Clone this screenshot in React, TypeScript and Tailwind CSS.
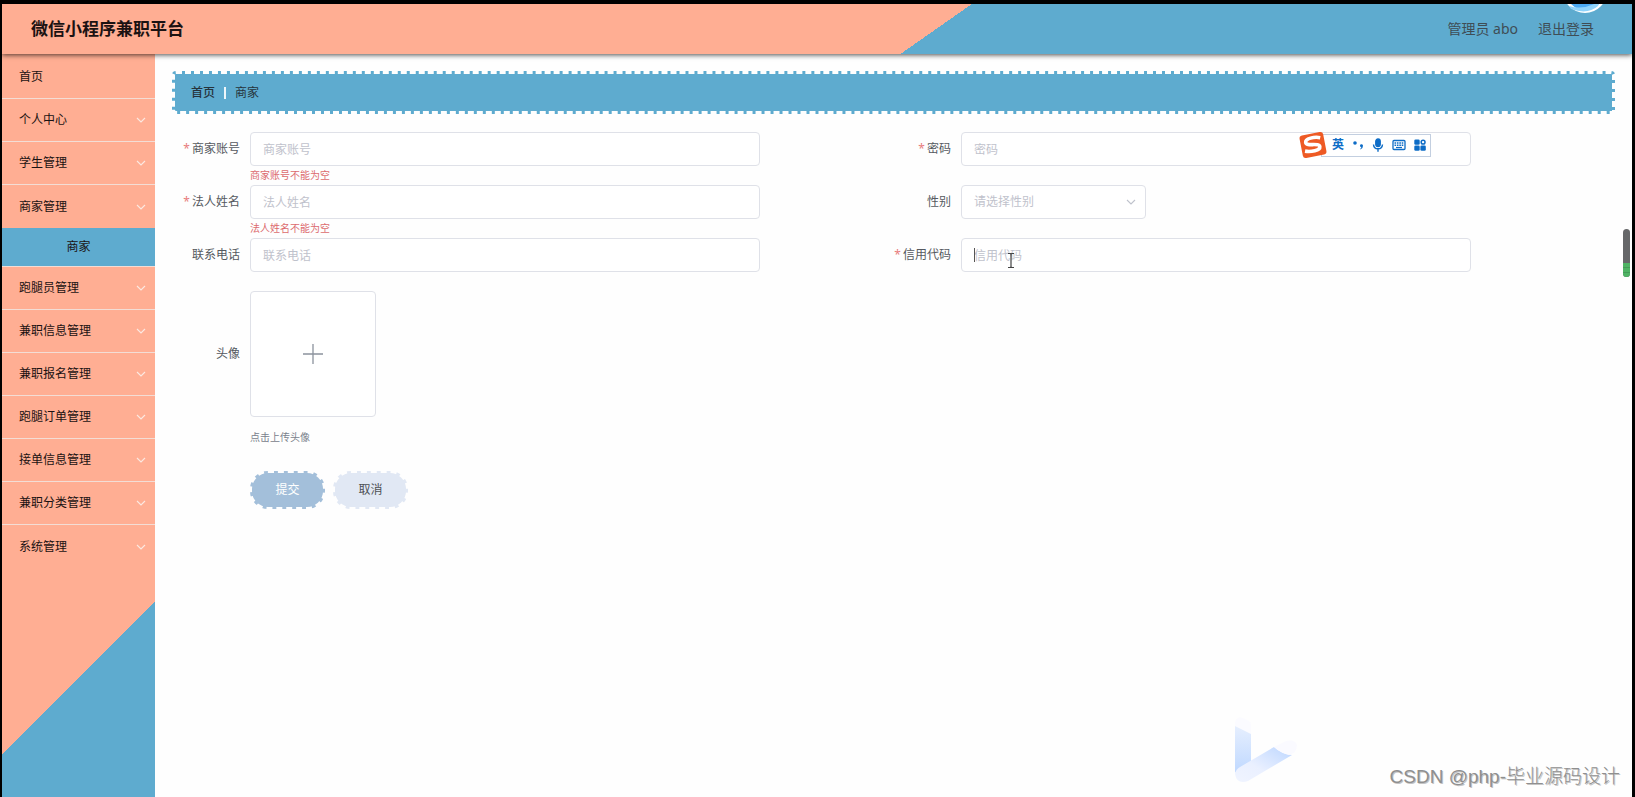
import { useState } from 'react';
import type { ReactNode } from 'react';
import clsx from 'clsx';

interface MenuItem {
  title: string;
  children?: string[];
  open?: boolean;
}

const menu: MenuItem[] = [
  { title: '首页' },
  { title: '个人中心', children: [] },
  { title: '学生管理', children: [] },
  { title: '商家管理', children: ['商家'], open: true },
  { title: '跑腿员管理', children: [] },
  { title: '兼职信息管理', children: [] },
  { title: '兼职报名管理', children: [] },
  { title: '跑腿订单管理', children: [] },
  { title: '接单信息管理', children: [] },
  { title: '兼职分类管理', children: [] },
  { title: '系统管理', children: [] },
];

const inputClass =
  'block h-[34px] w-full max-w-[510px] rounded border border-[#dfe1e8] bg-white px-3 text-xs text-[#606266] placeholder:text-[#bfc2cc] outline-none';

function Chevron({ className }: { className?: string }) {
  return (
    <svg viewBox="0 0 10 6" className={className} fill="none" stroke="currentColor" strokeWidth="1.1">
      <path d="M1 1l4 4 4-4" />
    </svg>
  );
}

function Header() {
  return (
    <header className="relative z-10 flex h-[50px] items-center justify-between overflow-hidden bg-[linear-gradient(145deg,#ffae93_57%,#5eabcf_57%)] pr-[38px] pl-[29px] shadow-[0_1px_5px_rgba(0,0,0,0.7)]">
      <h1 className="text-[17px] font-bold text-[#1b1212]">微信小程序兼职平台</h1>
      <div className="flex items-center gap-5 text-sm text-[#3f4d55]">
        <span>管理员 abo</span>
        <a href="#logout">退出登录</a>
      </div>
      <svg viewBox="0 0 44 44" className="absolute -top-[35px] right-[25px] size-11">
        <circle cx="22" cy="22" r="20.5" fill="#4aa8f2" stroke="#fff" strokeWidth="3" />
        <path d="M6 37q16 5 32-6l-3 6q-10 9-27 3z" fill="#8fd3fb" />
      </svg>
    </header>
  );
}

function Sidebar() {
  return (
    <aside className="w-[153px] shrink-0 bg-[linear-gradient(135deg,#ffae93_495px,#5eabcf_495px)] pt-0.5">
      <nav>
        <ul className="text-xs text-[#1b1212]">
          {menu.map((item, i) => (
            <li key={item.title}>
              <a
                href="#menu"
                className={clsx(
                  'flex h-[43px] items-center justify-between pr-[9px] pl-[17px]',
                  i < menu.length - 1 && !item.open && 'border-b border-[#f3ddd5]'
                )}
              >
                {item.title}
                {item.children && <Chevron className="h-[6px] w-[10px] text-[#fbe9e2]" />}
              </a>
              {item.open &&
                item.children?.map((child) => (
                  <a
                    key={child}
                    href="#merchant"
                    className="flex h-[39px] items-center justify-center border-b border-[#f3ddd5] bg-[#5eabcf]"
                  >
                    {child}
                  </a>
                ))}
            </li>
          ))}
        </ul>
      </nav>
    </aside>
  );
}

interface FieldProps {
  id: string;
  label: string;
  required?: boolean;
  error?: string;
  children: ReactNode;
}

function Field({ id, label, required, error, children }: FieldProps) {
  return (
    <div className="flex">
      <label
        htmlFor={id}
        className="flex w-[78px] shrink-0 items-center justify-end gap-0.5 self-stretch pr-[10px] text-xs text-[#555960]"
      >
        {required && <span className="text-[#e87c7c]">*</span>}
        <span className="whitespace-nowrap">{label}</span>
      </label>
      <div className="relative min-w-0 flex-1">
        {children}
        {error && <p className="absolute top-full left-0 pt-px text-[10px] leading-4 text-[#dc6b6e]">{error}</p>}
      </div>
    </div>
  );
}

function ImeBar() {
  return (
    <div className="absolute top-[78px] right-[201px] flex h-[26px] w-[132px] items-center">
      <div className="ml-[22px] flex h-[23px] flex-1 items-center justify-between border border-[#c3cfe0] bg-white pr-1 pl-[10px] text-[#0d6cc6]">
        <span className="text-xs font-bold">英</span>
        <svg viewBox="0 0 12 12" className="size-3" fill="currentColor">
          <circle cx="3" cy="4" r="1.8" />
          <path d="M8 6.5a1.5 1.5 0 1 1 3 .3q0 3-2.6 3.7l-.3-.7q1.2-.6 1.2-1.6Q8 8 8 6.5z" />
        </svg>
        <svg viewBox="0 0 12 14" className="h-[14px] w-3" fill="none" stroke="currentColor" strokeWidth="1.4">
          <rect x="3.8" y="1" width="4.4" height="7.5" rx="2.2" fill="currentColor" />
          <path d="M1.5 6.5q.3 4.3 4.5 4.3t4.5-4.3M6 11v2.7" />
        </svg>
        <svg viewBox="0 0 14 12" className="h-3 w-[14px]" fill="none" stroke="currentColor">
          <rect x="1" y="1.5" width="12" height="9" rx="1" strokeWidth="1.3" />
          <path d="M2.5 4h9M2.5 6.2h9" strokeWidth="1.4" strokeDasharray="1.6 .8" />
          <path d="M4 8.5h6" strokeWidth="1.2" />
        </svg>
        <svg viewBox="0 0 12 12" className="size-3" fill="currentColor">
          <rect x=".3" y=".5" width="5.4" height="5.2" rx="1.3" />
          <rect x="7.2" y="1.2" width="3.8" height="3.8" rx="1.8" fill="none" stroke="currentColor" strokeWidth="1.5" />
          <rect x=".3" y="6.5" width="5.4" height="5.2" rx="1.3" />
          <rect x="6.4" y="6.5" width="5.4" height="5.2" rx="1.3" />
        </svg>
      </div>
      <svg viewBox="0 0 28 28" className="absolute -top-px left-0 size-7">
        <g transform="rotate(-11 14 14)">
          <rect x="2" y="2.5" width="24" height="23" rx="3" fill="#ee5a24" />
          <path
            d="M22.5 8.2C17 6 7.500 6 7.300 10.200c-.2 4.300 13.400 2.400 13.100 6.700-.3 4-10 3.700-15.400 1.600"
            fill="none"
            stroke="#fff"
            strokeWidth="3.600"
          />
        </g>
      </svg>
    </div>
  );
}

function MerchantForm() {
  const [gender, setGender] = useState('');

  return (
    <form className="mt-[18px] pr-[21px]" onSubmit={(e) => e.preventDefault()}>
      <div className="grid grid-cols-2 gap-y-[19px]">
        <Field id="account" label="商家账号" required error="商家账号不能为空">
          <input id="account" type="text" placeholder="商家账号" className={inputClass} />
        </Field>
        <Field id="password" label="密码" required>
          <input id="password" type="text" placeholder="密码" className={inputClass} />
        </Field>
        <Field id="name" label="法人姓名" required error="法人姓名不能为空">
          <input id="name" type="text" placeholder="法人姓名" className={inputClass} />
        </Field>
        <Field id="gender" label="性别">
          <div className="relative w-[185px]">
            <select
              id="gender"
              value={gender}
              onChange={(e) => setGender(e.target.value)}
              className="block h-[34px] w-full appearance-none rounded border border-[#dfe1e8] bg-white px-3 text-xs text-[#bfc2cc] outline-none"
            >
              <option value="">请选择性别</option>
              <option value="男">男</option>
              <option value="女">女</option>
            </select>
            <Chevron className="pointer-events-none absolute top-[14px] right-[10px] h-[6px] w-[10px] text-[#bfc2cc]" />
          </div>
        </Field>
        <Field id="phone" label="联系电话">
          <input id="phone" type="text" placeholder="联系电话" className={inputClass} />
        </Field>
        <Field id="code" label="信用代码" required>
          <input id="code" type="text" placeholder="信用代码" className={inputClass} />
          <span className="absolute top-[10px] left-[13px] h-[14px] w-px bg-[#555]" />
          <svg viewBox="0 0 8 15" className="absolute top-[15px] left-[46px] h-[15px] w-2" fill="none" stroke="#444">
            <path d="M1 .5h2q1 0 1 1 0-1 1-1h2M4 1.5v12M1 14.500h2q1 0 1-1 0 1 1 1h2" strokeWidth="1.200" />
          </svg>
        </Field>
        <Field id="avatar" label="头像">
          <button
            id="avatar"
            type="button"
            aria-label="点击上传头像"
            className="flex size-[126px] items-center justify-center rounded border border-[#dfe1e8] bg-white"
          >
            <svg viewBox="0 0 20 20" className="size-5" stroke="#8c939d" strokeWidth="1.3">
              <path d="M10 0v20M0 10h20" />
            </svg>
          </button>
        </Field>
      </div>
      <p className="mt-3 pl-[78px] text-[10px] leading-4 text-[#7a818c]">点击上传头像</p>
      <div className="mt-[26px] flex gap-2 pl-[78px] text-xs">
        <button
          type="submit"
          className="h-[38px] w-[75px] rounded-[18px] border-2 border-dashed border-[#fefefe] bg-[#a3bfda] text-white"
        >
          提交
        </button>
        <button
          type="button"
          className="h-[38px] w-[75px] rounded-[18px] border-2 border-dashed border-[#fefefe] bg-[#e1e8f4] text-[#4d5055]"
        >
          取消
        </button>
      </div>
    </form>
  );
}

function PlayerLogo() {
  return (
    <svg viewBox="0 0 63 68" className="absolute right-[334px] bottom-[13px] h-[68px] w-[63px]">
      <defs>
        <linearGradient id="stem" x1="0" y1="0" x2="0" y2="1">
          <stop offset="0" stopColor="#e6effe" />
          <stop offset="1" stopColor="#bfd8ff" />
        </linearGradient>
        <linearGradient id="arm" x1="0" y1="1" x2="1" y2="0">
          <stop offset="0" stopColor="#f0f4ff" />
          <stop offset=".4" stopColor="#eaf0ff" />
          <stop offset="1" stopColor="#bcd6ff" />
        </linearGradient>
      </defs>
      <path d="M0 10V7q1-7 8-5l6 3q2 1 2 4v9z" fill="#fbfbff" />
      <path d="M0 10l16 8v29Q3 52 0 57z" fill="url(#stem)" />
      <path d="M5 51l34-20q7 7 18 8L13 65Q2 69 0 58q1-5 5-7z" fill="url(#arm)" />
      <path d="M39 31l12-6q9-2 11 4 0 8-8 10-8-2-15-8z" fill="#fafaff" />
    </svg>
  );
}

export default function App() {
  return (
    <div className="flex min-h-screen flex-col bg-black pt-1 pr-[3px] pl-[2px] font-['Noto_Sans','Noto_Sans_CJK_SC',sans-serif]">
      <Header />
      <div className="flex flex-1 bg-[#fefefe]">
        <Sidebar />
        <main className="relative min-w-0 flex-1 p-[17px]">
          <div className="flex h-[43px] items-center gap-[9px] rounded border-[3px] border-dashed border-[#fefefe] bg-[#5eabcf] px-4 text-xs text-[#26333b]">
            <a href="#home" className="font-medium">
              首页
            </a>
            <span className="h-3 w-[2px] bg-[#eef6fa]" />
            <span>商家</span>
          </div>
          <MerchantForm />
          <ImeBar />
          <div className="absolute top-[175px] right-[2px] flex h-12 w-[7px] flex-col justify-end overflow-hidden rounded-full bg-[#666769]">
            <span className="h-[14px] bg-[repeating-linear-gradient(#4fb364_0_4px,#459a58_4px_5px)]" />
          </div>
          <PlayerLogo />
          <p className="absolute right-[12px] bottom-[6px] font-['Liberation_Sans','Noto_Sans_CJK_SC',sans-serif] text-[19px] leading-7 font-light text-[#8f8f8f] [text-shadow:1px_1px_0_#c4c4c4]">
            CSDN @php-毕业源码设计
          </p>
        </main>
      </div>
    </div>
  );
}
